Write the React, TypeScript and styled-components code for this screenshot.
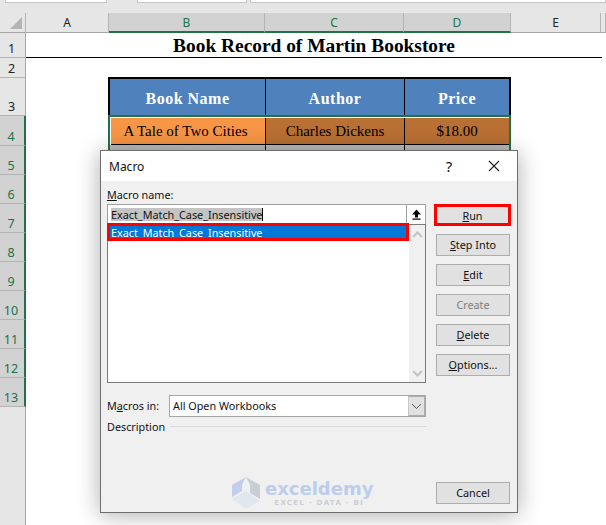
import React from "react";
import styled, { createGlobalStyle } from "styled-components";

const GlobalStyle = createGlobalStyle`
  html, body {
    margin: 0;
    padding: 0;
    background: #fff;
  }
  * {
    box-sizing: border-box;
  }
`;

const uiFont = `"Noto Sans", "Open Sans", sans-serif`;
const sheetFont = `"Liberation Serif", "Times New Roman", serif`;

const Frame = styled.div`
  position: relative;
  width: 606px;
  height: 525px;
  overflow: hidden;
  background: #fff;
  font-family: ${uiFont};
`;

const TopStrip = styled.div`
  display: flex;
  gap: 3px;
  height: 13px;
  padding-left: 5px;
  background: #e6e6e6;
  align-items: flex-start;
`;

const FormulaBox = styled.div<{ $width: number; $gapAfter?: number }>`
  width: ${(p) => p.$width}px;
  height: 3px;
  margin-right: ${(p) => p.$gapAfter || 0}px;
  background: #fff;
  border: 1px solid #c6c6c6;
  border-top: none;
`;

const ColumnHeaders = styled.div`
  display: grid;
  grid-template-columns: 26px 83px 156px 139px 107px 90px 5px;
  height: 20px;
`;

const ColumnHead = styled.div<{ $active?: boolean }>`
  display: flex;
  align-items: center;
  justify-content: center;
  font-size: 12px;
  color: ${(p) => (p.$active ? "#217346" : "#222")};
  background: ${(p) => (p.$active ? "#d2d2d2" : "#e6e6e6")};
  border-right: 1px solid #b4b4b4;
  border-bottom: ${(p) => (p.$active ? "2px solid #217346" : "1px solid #a6a6a6")};
`;

const Corner = styled(ColumnHead)`
  padding: 3px;
  justify-content: flex-end;
  align-items: flex-end;
`;

const Body = styled.div`
  display: flex;
  height: 492px;
`;

const RowRail = styled.div`
  width: 26px;
  background: #e6e6e6;
  border-right: 1px solid #a6a6a6;
`;

const RowHead = styled.div<{ $height: number; $active?: boolean }>`
  display: flex;
  align-items: flex-end;
  justify-content: center;
  width: 26px;
  height: ${(p) => p.$height}px;
  padding-right: 2px;
  font-size: 12.5px;
  line-height: 16px;
  color: ${(p) => (p.$active ? "#217346" : "#222")};
  background: ${(p) => (p.$active ? "#d2d2d2" : "#e6e6e6")};
  border-bottom: 1px solid #b4b4b4;
  border-right: ${(p) => (p.$active ? "2px solid #217346" : "1px solid #a6a6a6")};
`;

const SheetArea = styled.div`
  flex: 1;
  font-family: ${sheetFont};
`;

const TitleRow = styled.div`
  width: 576px;
  height: 25px;
  display: flex;
  align-items: center;
  justify-content: center;
  padding-top: 2px;
  font-size: 19.4px;
  font-weight: 700;
  color: #000;
  border-bottom: 1px solid #000;
`;

const SpacerRow = styled.div`
  height: 19px;
`;

const BookTable = styled.div`
  width: 403px;
  margin-left: 82px;
`;

const TableRow = styled.div<{ $height: number }>`
  display: grid;
  grid-template-columns: 155px 139px 1fr;
  height: ${(p) => p.$height}px;
`;

const HeaderRow = styled(TableRow)`
  border: 2px solid #000;
  border-bottom: none;
`;

const HeaderCell = styled.div`
  display: flex;
  align-items: center;
  justify-content: center;
  padding-top: 3px;
  background: #4f81bd;
  color: #fff;
  font-size: 16px;
  font-weight: 700;
  letter-spacing: 0.5px;
  & + & {
    border-left: 1px solid #000;
  }
`;

const SelectedRow = styled(TableRow)`
  grid-template-columns: 154px 139px 1fr;
  border: 2px solid #217346;
  border-bottom: none;
  padding: 1px 0 0 1px;
  background: #fff;
`;

const DataCell = styled.div<{ $fill: string; $inset?: number }>`
  display: flex;
  align-items: center;
  justify-content: center;
  padding-right: ${(p) => p.$inset || 0}px;
  background: ${(p) => p.$fill};
  color: #000;
  font-size: 15px;
  border-bottom: 1px solid #000;
  & + & {
    border-left: 1px solid #000;
  }
`;

const GrayRow = styled(TableRow)`
  border-left: 2px solid #217346;
  border-right: 2px solid #217346;
`;

const Dialog = styled.div`
  position: absolute;
  left: 100px;
  top: 150px;
  width: 418px;
  height: 363px;
  display: flex;
  flex-direction: column;
  background: #f0f0f0;
  border: 1px solid #6e6e6e;
  box-shadow: 0 2px 22px rgba(0, 0, 0, 0.32);
  font-size: 10.8px;
  color: #111;
`;

const TitleBar = styled.div`
  display: flex;
  align-items: center;
  height: 30px;
  padding-left: 8px;
  background: #fff;
  font-size: 12px;
`;

const TitleText = styled.span`
  flex: 1;
`;

const HelpMark = styled.span`
  width: 16px;
  margin-right: 31px;
  text-align: center;
  font-size: 15px;
`;

const CloseButton = styled.svg`
  width: 12px;
  height: 12px;
  margin-right: 17px;
`;

const DialogBody = styled.div`
  position: relative;
  flex: 1;
  display: flex;
  gap: 10px;
  padding: 6px 7px 8px 6px;
`;

const LeftColumn = styled.div`
  width: 319px;
  display: flex;
  flex-direction: column;
`;

const RightColumn = styled.div`
  width: 74px;
  display: flex;
  flex-direction: column;
  gap: 8px;
  padding-top: 17px;
`;

const FieldLabel = styled.div`
  height: 17px;
  line-height: 16px;
`;

const Key = styled.span`
  text-decoration: underline;
`;

const NameRow = styled.div`
  display: flex;
  height: 20px;
`;

const NameInput = styled.div`
  flex: 1;
  display: flex;
  align-items: center;
  padding-left: 3px;
  background: #fff;
  border: 1px solid #a0a0a0;
  border-bottom: none;
  border-right: none;
`;

const SelectedText = styled.span`
  background: #c4c4c4;
  line-height: 13px;
  border-right: 1px solid #000;
`;

const UpButton = styled.div`
  width: 20px;
  display: flex;
  align-items: center;
  justify-content: center;
  background: #fff;
  border: 1px solid #a0a0a0;
  border-bottom: none;
`;

const ListBox = styled.div`
  display: flex;
  height: 159px;
  background: #fff;
  border: 1px solid #7a7a7a;
`;

const ListArea = styled.div`
  flex: 1;
`;

/* overflow clips the underscores behind the red frame, as in the dialog */
const ListItem = styled.div`
  width: 302px;
  height: 18px;
  margin: -2px 0 0 -1px;
  padding: 1px 0 0 1px;
  line-height: 12px;
  overflow: hidden;
  background: #0078d7;
  border: 3px solid #f00;
  color: #fff;
`;

const ScrollBar = styled.div`
  width: 17px;
  display: flex;
  flex-direction: column;
  align-items: center;
  justify-content: space-between;
  padding: 6px 0 5px;
  background: #f0f0f0;
`;

const MacrosRow = styled.div`
  display: flex;
  align-items: center;
  height: 22px;
  margin-top: 12px;
`;

const MacrosLabel = styled.div`
  width: 62px;
  padding-bottom: 2px;
`;

const Combo = styled.div`
  flex: 1;
  height: 22px;
  display: flex;
  align-items: center;
  justify-content: space-between;
  padding-left: 3px;
  background: #fff;
  border: 1px solid #a6a6a6;
`;

const ComboValue = styled.span`
  padding-bottom: 2px;
`;

const ComboButton = styled.div`
  width: 17px;
  height: 20px;
  display: flex;
  align-items: center;
  justify-content: center;
  background: #e1e1e1;
  border: 1px solid #adadad;
  border-left-color: #c8c8c8;
`;

const DescriptionRow = styled.div`
  display: flex;
  align-items: center;
  gap: 5px;
  height: 16px;
  margin-top: 1px;
`;

const DescriptionRule = styled.div`
  flex: 1;
  height: 1px;
  margin-right: -1px;
  background: #dadada;
`;

const DialogButton = styled.div<{ $disabled?: boolean; $highlight?: boolean; $bottom?: boolean }>`
  height: 22px;
  display: flex;
  align-items: center;
  justify-content: center;
  padding-bottom: ${(p) => (p.$highlight ? 0 : 2)}px;
  background: #e1e1e1;
  border: ${(p) => (p.$highlight ? "3px solid #f00" : "1px solid #adadad")};
  color: ${(p) => (p.$disabled ? "#7d7d7d" : "#111")};
  width: ${(p) => (p.$highlight ? 77 : 74)}px;
  margin-left: ${(p) => (p.$highlight ? -2 : 0)}px;
  margin-top: ${(p) => (p.$bottom ? "auto" : 0)};
`;

const Watermark = styled.div`
  position: absolute;
  left: 131px;
  bottom: 3px;
  display: flex;
  align-items: center;
  gap: 5px;
  opacity: 0.85;
`;

const WatermarkLogo = styled.svg`
  width: 28px;
  height: 32px;
`;

const WatermarkText = styled.div`
  display: flex;
  flex-direction: column;
  align-items: center;
`;

const WatermarkName = styled.span`
  font-family: "DejaVu Sans", sans-serif;
  font-size: 18px;
  font-weight: 700;
  line-height: 20px;
  color: #b4c7ee;
`;

const WatermarkTag = styled.span`
  font-family: "DejaVu Sans", sans-serif;
  font-size: 7px;
  font-weight: 700;
  line-height: 8px;
  letter-spacing: 1.3px;
  color: #c6c9cf;
`;

const columns = ["A", "B", "C", "D", "E"];
const rows = [
  { n: 1, h: 25 },
  { n: 2, h: 20 },
  { n: 3, h: 38 },
  ...[4, 5, 6, 7, 8, 9, 10, 11, 12, 13].map((n) => ({ n, h: n === 4 ? 30 : 29 })),
];

const Chevron = ({ up, color, weight }: { up?: boolean; color: string; weight: number }) => (
  <svg width="11" height="7" viewBox="0 0 11 7">
    <path
      d={up ? "M1 6 L5.5 1.5 L10 6" : "M1 1 L5.5 5.5 L10 1"}
      fill="none"
      stroke={color}
      strokeWidth={weight}
    />
  </svg>
);

export default function App() {
  return (
    <Frame>
      <GlobalStyle />
      <TopStrip>
        <FormulaBox $width={102} $gapAfter={27} />
        <FormulaBox $width={110} />
        <FormulaBox $width={356} />
      </TopStrip>
      <ColumnHeaders>
        <Corner>
          <svg width="12" height="12" viewBox="0 0 12 12">
            <path d="M12 0 V12 H0 Z" fill="#b4b4b4" />
          </svg>
        </Corner>
        {columns.map((c) => (
          <ColumnHead key={c} $active={c !== "A" && c !== "E"}>
            {c}
          </ColumnHead>
        ))}
        <ColumnHead />
      </ColumnHeaders>
      <Body>
        <RowRail>
          {rows.map((r) => (
            <RowHead key={r.n} $height={r.h} $active={r.n >= 4}>
              {r.n}
            </RowHead>
          ))}
        </RowRail>
        <SheetArea>
          <TitleRow>Book Record of Martin Bookstore</TitleRow>
          <SpacerRow />
          <BookTable>
            <HeaderRow $height={38}>
              <HeaderCell>Book Name</HeaderCell>
              <HeaderCell>Author</HeaderCell>
              <HeaderCell>Price</HeaderCell>
            </HeaderRow>
            <SelectedRow $height={30}>
              <DataCell $fill="#f79646" $inset={5}>A Tale of Two Cities</DataCell>
              <DataCell $fill="#b97034">Charles Dickens</DataCell>
              <DataCell $fill="#b97034">$18.00</DataCell>
            </SelectedRow>
            <GrayRow $height={29}>
              <DataCell $fill="#bdbdbd" />
              <DataCell $fill="#bdbdbd" />
              <DataCell $fill="#bdbdbd" />
            </GrayRow>
          </BookTable>
        </SheetArea>
      </Body>
      <Dialog>
        <TitleBar>
          <TitleText>Macro</TitleText>
          <HelpMark>?</HelpMark>
          <CloseButton viewBox="0 0 12 12">
            <path d="M1 1 L11 11 M11 1 L1 11" stroke="#222" strokeWidth="1.1" fill="none" />
          </CloseButton>
        </TitleBar>
        <DialogBody>
          <LeftColumn>
            <FieldLabel>
              <Key>M</Key>acro name:
            </FieldLabel>
            <NameRow>
              <NameInput>
                <SelectedText>Exact_Match_Case_Insensitive</SelectedText>
              </NameInput>
              <UpButton>
                <svg width="11" height="11" viewBox="0 0 11 11">
                  <path d="M5.5 0.5 L10 5.5 H7 V8.5 H4 V5.5 H1 Z M1.5 9.5 H9.5 V10.8 H1.5 Z" fill="#000" />
                </svg>
              </UpButton>
            </NameRow>
            <ListBox>
              <ListArea>
                <ListItem>Exact_Match_Case_Insensitive</ListItem>
              </ListArea>
              <ScrollBar>
                <Chevron up color="#c4c4c4" weight={2} />
                <Chevron color="#c4c4c4" weight={2} />
              </ScrollBar>
            </ListBox>
            <MacrosRow>
              <MacrosLabel>
                M<Key>a</Key>cros in:
              </MacrosLabel>
              <Combo>
                <ComboValue>All Open Workbooks</ComboValue>
                <ComboButton>
                  <Chevron color="#555" weight={1} />
                </ComboButton>
              </Combo>
            </MacrosRow>
            <DescriptionRow>
              Description
              <DescriptionRule />
            </DescriptionRow>
          </LeftColumn>
          <RightColumn>
            <DialogButton $highlight>
              <span>
                <Key>R</Key>un
              </span>
            </DialogButton>
            <DialogButton>
              <span>
                <Key>S</Key>tep Into
              </span>
            </DialogButton>
            <DialogButton>
              <span>
                <Key>E</Key>dit
              </span>
            </DialogButton>
            <DialogButton $disabled>Create</DialogButton>
            <DialogButton>
              <span>
                <Key>D</Key>elete
              </span>
            </DialogButton>
            <DialogButton>
              <span>
                <Key>O</Key>ptions...
              </span>
            </DialogButton>
            <DialogButton $bottom>Cancel</DialogButton>
          </RightColumn>
          <Watermark>
            <WatermarkLogo viewBox="0 0 28 32">
              <path d="M14 0 L0 8 V20 L10 14 V8 Z" fill="#b9c9ee" />
              <path d="M14 0 L28 8 V22 L18 16 V8 Z" fill="#c3c8d0" />
              <path d="M0 22 L14 14 L28 24 L14 32 Z" fill="#dfe6ee" />
            </WatermarkLogo>
            <WatermarkText>
              <WatermarkName>exceldemy</WatermarkName>
              <WatermarkTag>EXCEL · DATA · BI</WatermarkTag>
            </WatermarkText>
          </Watermark>
        </DialogBody>
      </Dialog>
    </Frame>
  );
}
